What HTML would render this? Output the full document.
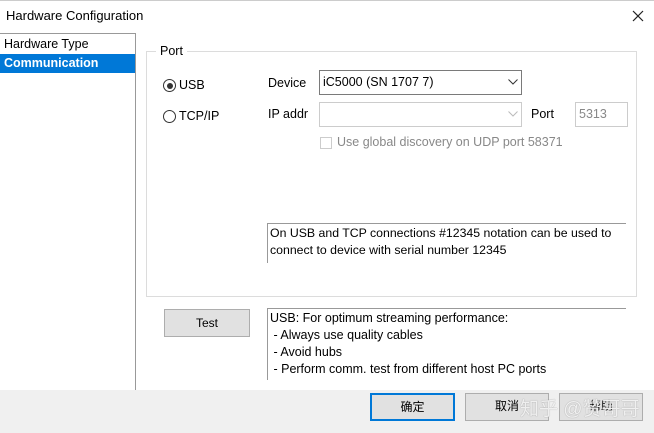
<!DOCTYPE html><html><head><style>
body{margin:0;width:654px;height:433px;background:#fff;font-family:"Liberation Sans","Noto Sans CJK SC",sans-serif;font-size:12.5px;color:#000;position:relative;overflow:hidden}
div,span,svg{position:absolute;box-sizing:border-box}
.btn{background:#e1e1e1;border:1px solid #adadad;text-align:center;line-height:25px;font-size:12px}
</style></head><body>
<div style="left:0;top:0;width:654px;height:1px;background:#ccc"></div>
<div style="left:6px;top:8px;font-size:13px">Hardware Configuration</div>
<svg style="left:632px;top:10px" width="12" height="12"><path d="M1 1L11 11M11 1L1 11" stroke="#222" stroke-width="1.2"/></svg>
<div style="left:0;top:33px;width:136px;height:357px;border-top:1px solid #999;border-right:1px solid #999"></div>
<div style="left:4px;top:37px">Hardware Type</div>
<div style="left:0;top:54px;width:135px;height:19px;background:#0078d7;color:#fff;font-weight:bold;padding-left:4px;line-height:19px">Communication</div>
<div style="left:146px;top:51px;width:491px;height:246px;border:1px solid #dcdcdc"></div>
<div style="left:156px;top:44px;background:#fff;padding:0 4px">Port</div>
<div style="left:163px;top:79px;width:13px;height:13px;border:1px solid #333;border-radius:50%"></div>
<div style="left:166.5px;top:82.5px;width:6px;height:6px;background:#333;border-radius:50%"></div>
<div style="left:179px;top:78px">USB</div>
<div style="left:163px;top:110px;width:13px;height:13px;border:1px solid #333;border-radius:50%"></div>
<div style="left:179px;top:109px">TCP/IP</div>
<div style="left:268px;top:76px">Device</div>
<div style="left:319px;top:70px;width:203px;height:25px;border:1px solid #7a7a7a;padding:4px 3px">iC5000 (SN 1707 7)</div>
<svg style="left:508px;top:79px" width="10" height="6"><path d="M0.5 0.5L5 5L9.5 0.5" stroke="#333" fill="none"/></svg>
<div style="left:268px;top:107px">IP addr</div>
<div style="left:319px;top:102px;width:203px;height:25px;border:1px solid #ccc"></div>
<svg style="left:508px;top:111px" width="10" height="6"><path d="M0.5 0.5L5 5L9.5 0.5" stroke="#bbb" fill="none"/></svg>
<div style="left:531px;top:107px">Port</div>
<div style="left:575px;top:102px;width:53px;height:25px;border:1px solid #ccc;color:#888;padding:4px 3px">5313</div>
<div style="left:320px;top:137px;width:12px;height:12px;border:1px solid #ccc"></div>
<div style="left:337px;top:135px;color:#888">Use global discovery on UDP port 58371</div>
<div style="left:267px;top:223px;width:359px;height:40px;border-top:1px solid #999;border-left:1px solid #999;padding:1px 2px;line-height:17px;font-size:12.3px">On USB and TCP connections #12345 notation can be used to connect to device with serial number 12345</div>
<div class="btn" style="left:164px;top:309px;width:86px;height:28px;line-height:26px">Test</div>
<div style="left:267px;top:308px;width:359px;height:72px;border-top:1px solid #999;border-left:1px solid #999;padding:1px 2px;line-height:17px;white-space:pre">USB: For optimum streaming performance:
 - Always use quality cables
 - Avoid hubs
 - Perform comm. test from different host PC ports</div>
<div style="left:0;top:390px;width:654px;height:43px;background:#f0f0f0"></div>
<div class="btn" style="left:370px;top:393px;width:85px;height:28px;border:2px solid #0078d7">确定</div>
<div class="btn" style="left:465px;top:393px;width:84px;height:28px">取消</div>
<div class="btn" style="left:559px;top:393px;width:84px;height:28px">帮助</div>
<div style="left:520px;top:394px;font-size:19px;color:rgba(255,255,255,0.85);text-shadow:0 0 1px #888">知乎 @赞哥哥</div>
</body></html>
